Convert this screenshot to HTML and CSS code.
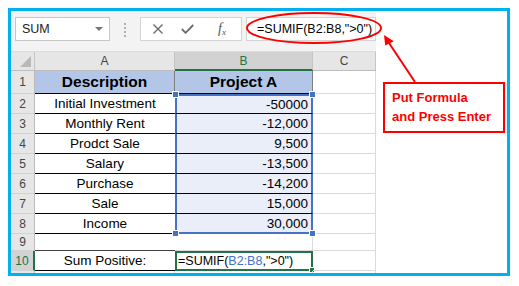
FILE: index.html
```html
<!DOCTYPE html>
<html>
<head>
  <meta charset="UTF-8">
  <title>SUMIF positive values</title>
  <link rel="stylesheet" href="styles.css">
</head>
<body>
  <div class="frame">
    <div class="sheet">
      <div class="toolbar">
        <div class="namebox"><span>SUM</span><span class="caret"></span></div>
        <div class="grip"><i></i><i></i><i></i><i></i></div>
        <div class="buttons">
          <svg class="ico-x" width="10" height="10" viewBox="0 0 10 10"><path d="M0.5 0.5 L9.5 9.5 M9.5 0.5 L0.5 9.5"/></svg>
          <svg class="ico-ok" width="13" height="10" viewBox="0 0 13 10"><path d="M0.8 5 L4.6 8.8 L12.2 1"/></svg>
          <span class="fx">f<sub>x</sub></span>
        </div>
        <div class="formula">=SUMIF(B2:B8,"&gt;0")</div>
      </div>

      <div class="grid">
        <div class="c corner"></div>
        <div class="c ch">A</div>
        <div class="c ch sel">B</div>
        <div class="c ch">C</div>

        <div class="c rh">1</div>
        <div class="c t tb hd a1">Description</div>
        <div class="c t tb hd b1">Project A</div>
        <div class="c"></div>

        <div class="c rh">2</div>
        <div class="c t tb na">Initial Investment</div>
        <div class="c n tb ref ref-top">-50000</div>
        <div class="c"></div>

        <div class="c rh">3</div>
        <div class="c t tb na">Monthly Rent</div>
        <div class="c n tb ref">-12,000</div>
        <div class="c"></div>

        <div class="c rh">4</div>
        <div class="c t tb na">Prodct Sale</div>
        <div class="c n tb ref">9,500</div>
        <div class="c"></div>

        <div class="c rh">5</div>
        <div class="c t tb na">Salary</div>
        <div class="c n tb ref">-13,500</div>
        <div class="c"></div>

        <div class="c rh">6</div>
        <div class="c t tb na">Purchase</div>
        <div class="c n tb ref">-14,200</div>
        <div class="c"></div>

        <div class="c rh">7</div>
        <div class="c t tb na">Sale</div>
        <div class="c n tb ref">15,000</div>
        <div class="c"></div>

        <div class="c rh">8</div>
        <div class="c t tb na">Income</div>
        <div class="c n ref ref-bot">30,000</div>
        <div class="c"></div>

        <div class="c rh">9</div>
        <div class="c a9"></div>
        <div class="c b9"></div>
        <div class="c"></div>

        <div class="c rh sel">10</div>
        <div class="c t tb na">Sum Positive:</div>
        <div class="c active">=SUMIF(<span class="rng">B2:B8</span>,"&gt;0")</div>
        <div class="c"></div>

        <div class="c rh last"></div>
        <div class="c last"></div>
        <div class="c last"></div>
        <div class="c last"></div>
      </div>
    </div>

    <div class="note-area">
      <div class="note">Put Formula<br>and Press Enter</div>
    </div>
  </div>

  <svg class="overlay" width="519" height="286" viewBox="0 0 519 286">
    <ellipse cx="314" cy="28" rx="67" ry="15" fill="none" stroke="#ff0000" stroke-width="2"/>
    <line x1="415" y1="82" x2="389" y2="43" stroke="#ff0000" stroke-width="2"/>
    <polygon points="384,35 393.8,41.2 385.2,45.6" fill="#ff0000"/>
  </svg>
</body>
</html>
```

FILE: styles.css
```css
body { margin: 0; background: #fff; font-family: "Liberation Sans", Arial, sans-serif; color: #000; }

.frame { margin: 8px 0 0 8px; width: 496px; height: 262px; border: 3px solid #00b0f0; display: flex; }
.sheet { width: 365px; background: #fff; }

/* formula bar */
.toolbar { height: 41px; box-sizing: border-box; padding: 6px 0 0 4px; background: #f3f3f3; display: flex; align-items: flex-start; border-bottom: 1px solid #dcdcdc; }
.namebox { width: 95px; height: 24px; box-sizing: border-box; background: #fff; border: 1px solid #c6c6c6; display: flex; align-items: center; justify-content: space-between; padding: 0 6px; font-size: 12.5px; color: #222; }
.caret { width: 0; height: 0; border-left: 4px solid transparent; border-right: 4px solid transparent; border-top: 4px solid #777; }
.grip { width: 2px; margin: 6px 14px 0; display: flex; flex-direction: column; gap: 2px; }
.grip i { width: 2px; height: 2px; background: #b0b0b0; }
.buttons { width: 102px; height: 24px; box-sizing: border-box; background: #fff; border: 1px solid #d4d4d4; display: flex; align-items: center; padding-left: 12px; }
.ico-x path { stroke: #6a6a6a; stroke-width: 1.4; fill: none; }
.ico-ok { margin-left: 18px; }
.ico-ok path { stroke: #6a6a6a; stroke-width: 1.8; fill: none; }
.fx { margin-left: 24px; font-family: "Liberation Serif", serif; font-style: italic; font-size: 14px; color: #555; line-height: 1; }
.fx sub { font-size: 9px; vertical-align: -2px; }
.formula { flex: 1; margin-left: 4px; height: 24px; box-sizing: border-box; background: #fff; border: 1px solid #d4d4d4; padding-left: 10px; font-size: 12.5px; line-height: 22px; white-space: nowrap; }

/* grid */
.grid { display: grid; grid-template-columns: 24px 140px 138px 63px; grid-template-rows: 19px 23px repeat(7, 20px) 17px 20px 2px; }
.c { box-sizing: border-box; border-right: 1px solid #dadada; border-bottom: 1px solid #dadada; display: flex; align-items: center; white-space: nowrap; overflow: hidden; font-size: 13.5px; position: relative; }
.c.t { justify-content: center; }
.c.n { justify-content: flex-end; padding-right: 3px; }
.c.tb { border-bottom-color: #000; }
.c.na { border-right: none; }

.corner, .ch { background: #e6e6e6; border-right-color: #c4c4c4; border-bottom-color: #bdbdbd; }
.ch { justify-content: center; font-size: 12px; color: #444; }
.ch.sel { background: #d2d2d2; border-bottom: 2px solid #217346; color: #217346; }
.corner::after { content: ""; position: absolute; right: 3px; bottom: 3px; width: 11px; height: 11px; background: #b8b8b8; clip-path: polygon(100% 0, 100% 100%, 0 100%); }

.rh { background: #e6e6e6; border-right-color: #bcbcbc; border-bottom-color: #d2d2d2; justify-content: center; font-size: 12px; color: #444; }
.rh.sel { background: #d2d2d2; color: #217346; border-right: 2px solid #217346; }
.c.last { border-bottom: none; }

.hd { background: #b4c6e7; font-weight: bold; font-size: 15.5px; }
.a1 { border-right-color: #7f7f7f; }
.b1 { border-right-color: #7f7f7f; }

.ref { background: #e9eef8; border-left: 2px solid #4472c4; border-right: 2px solid #4472c4; overflow: visible; }
.ref-top { border-top: 2px solid #4472c4; }
.ref-bot { border-bottom: 2px solid #4472c4; }
.ref-top::before, .ref-top::after, .ref-bot::before, .ref-bot::after { content: ""; position: absolute; width: 5px; height: 5px; background: #4472c4; border: 1px solid #fff; z-index: 2; }
.ref-top::before { left: -5px; top: -5px; }
.ref-top::after { right: -5px; top: -5px; }
.ref-bot::before { left: -5px; bottom: -5px; }
.ref-bot::after { right: -5px; bottom: -5px; }

.a9 { border-right: none; border-bottom-color: #404040; }
.active { border: 2px solid #217346; font-size: 12.5px; padding-left: 1px; overflow: visible; }
.active::after { content: ""; position: absolute; right: -4px; bottom: -4px; width: 4px; height: 4px; background: #217346; border: 1px solid #fff; }
.rng { color: #4472c4; }

/* callout */
.note-area { flex: 1; padding: 71px 0 0 7px; background: #fff; }
.note { width: 122px; height: 51px; box-sizing: border-box; border: 2px solid #ff0000; padding: 4px 0 0 7px; color: #ff0000; font-weight: bold; font-size: 13px; line-height: 19px; }

.overlay { position: absolute; top: 0; left: 0; pointer-events: none; }
```
